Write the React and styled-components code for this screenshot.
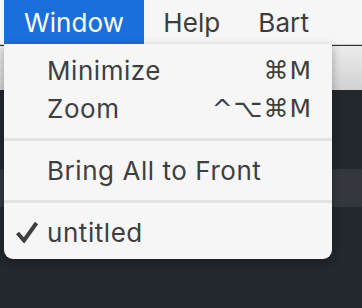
import React from "react";
import styled, { createGlobalStyle } from "styled-components";

const GlobalStyle = createGlobalStyle`
  html, body {
    margin: 0;
    padding: 0;
    width: 362px;
    height: 308px;
    overflow: hidden;
    background: #23272e;
  }
  body {
    font-family: Inter, "Noto Sans", "DejaVu Sans", sans-serif;
  }
`;

const Screen = styled.div`
  position: relative;
  width: 362px;
  height: 308px;
  display: flex;
  flex-direction: column;
`;

const MenuBar = styled.div`
  height: 44px;
  background: #f6f6f6;
  border-bottom: 1px solid #cdcdcd;
  display: flex;
  align-items: stretch;
  padding-left: 4px;
`;

const MenuTitle = styled.div`
  display: flex;
  align-items: center;
  padding: 0 ${(p) => p.$pad || 19}px;
  font-size: 26px;
  letter-spacing: 0.1px;
  color: ${(p) => (p.$active ? "#ffffff" : "#3c3c3c")};
  background: ${(p) => (p.$active ? "#1b6fdc" : "transparent")};
`;

const Toolbar = styled.div`
  height: 44px;
  border-top: 1px solid #2e2e2e;
  background: linear-gradient(#ebebeb, #d2d2d2);
`;

const Content = styled.div`
  flex: 1;
  background: #23272e;
  padding-top: 79px;
`;

const Band = styled.div`
  height: 38px;
  background: #34373e;
`;

const Dropdown = styled.div`
  position: absolute;
  top: 44px;
  left: 4px;
  width: 328px;
  padding: 7px 0 8px;
  background: #f6f6f6;
  border-radius: 0 0 9px 9px;
  box-shadow: 0 3px 10px rgba(0, 0, 0, 0.3);
  color: #3f3f3f;
`;

const Item = styled.div`
  height: 38px;
  display: flex;
  align-items: center;
  padding: 0 20px 0 0;
  font-size: 26px;
  letter-spacing: 0.55px;
`;

const CheckCol = styled.div`
  box-sizing: border-box;
  width: 43px;
  display: flex;
  justify-content: center;
  padding-left: 2px;
`;

const Label = styled.span`
  flex: 1;
`;

const Shortcut = styled.span`
  font-family: "DejaVu Sans", Inter, sans-serif;
  font-size: 25px;
  letter-spacing: 1px;
`;

const Separator = styled.div`
  height: 24px;
  display: flex;
  align-items: center;

  &::after {
    content: "";
    flex: 1;
    height: 3px;
    background: #e3e3e3;
  }
`;

const Check = () => (
  <svg width="24" height="22" viewBox="0 0 24 22">
    <path d="M2.5 12 L9 19.5 L21.5 2" fill="none" stroke="#3f3f3f" strokeWidth="4" strokeLinejoin="miter" />
  </svg>
);

const MenuItem = ({ checked, children, shortcut }) => (
  <Item>
    <CheckCol>{checked && <Check />}</CheckCol>
    <Label>{children}</Label>
    {shortcut && <Shortcut>{shortcut}</Shortcut>}
  </Item>
);

export default function App() {
  return (
    <>
      <GlobalStyle />
      <Screen>
        <MenuBar>
          <MenuTitle $active $pad={20}>Window</MenuTitle>
          <MenuTitle>Help</MenuTitle>
          <MenuTitle>Bart</MenuTitle>
        </MenuBar>
        <Toolbar />
        <Content>
          <Band />
        </Content>
        <Dropdown>
          <MenuItem shortcut="⌘M">Minimize</MenuItem>
          <MenuItem shortcut="^⌥⌘M">Zoom</MenuItem>
          <Separator />
          <MenuItem>Bring All to Front</MenuItem>
          <Separator />
          <MenuItem checked>untitled</MenuItem>
        </Dropdown>
      </Screen>
    </>
  );
}
